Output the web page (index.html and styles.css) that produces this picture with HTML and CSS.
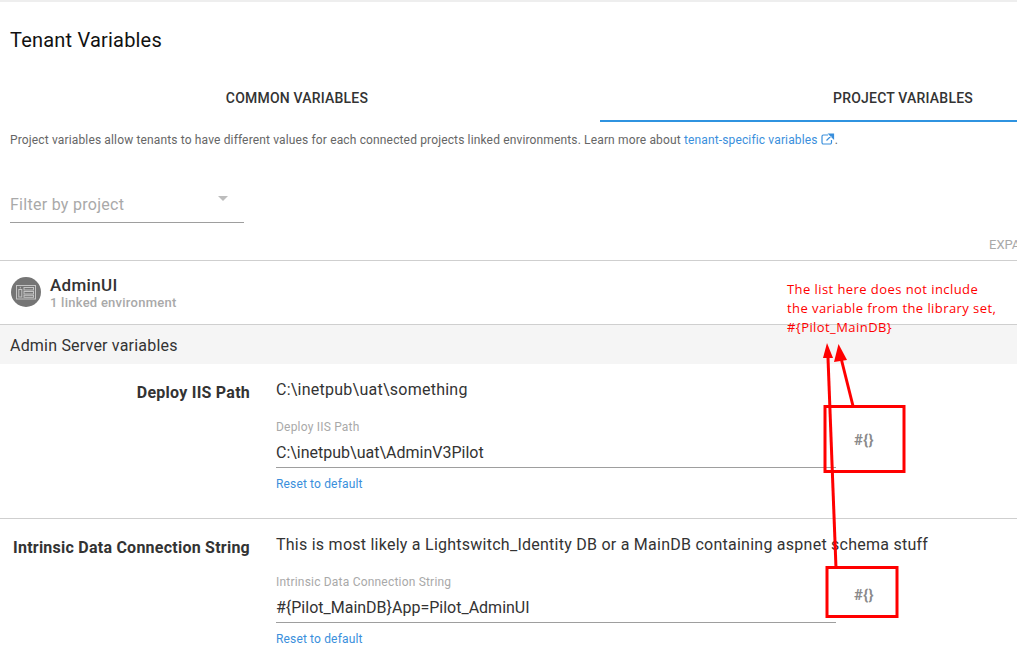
FILE: index.html
```html
<!DOCTYPE html>
<html lang="en">
<head>
<meta charset="utf-8">
<title>Tenant Variables</title>
<link rel="stylesheet" href="styles.css">
</head>
<body>
<main class="page">
  <h1 class="title">Tenant Variables</h1>
  <nav class="tabs">
    <div class="tab tab-common">COMMON VARIABLES</div>
    <div class="tab tab-project">PROJECT VARIABLES</div>
  </nav>
  <p class="help">Project variables allow tenants to have different values for each connected projects linked environments. Learn more about <a class="link">tenant-specific variables <svg class="ext" viewBox="0 0 14 12" width="14" height="12"><path d="M10.5 7v2.6a1.4 1.4 0 0 1-1.4 1.4H2.4A1.4 1.4 0 0 1 1 9.600V3.400A1.400 1.400 0 0 1 2.400 2H7" fill="none" stroke="#3a8fdc" stroke-width="1.200"/><path d="M5.500 7.500 11 2M8 1h4.500v4.500z" fill="#3a8fdc" stroke="#3a8fdc" stroke-width="1.200"/></svg></a>.</p>
  <div class="filter">
    <span class="filter-text">Filter by project</span>
    <span class="caret"></span>
  </div>
  <div class="expand-row"><span class="expand">EXPAND ALL</span></div>
  <section class="project">
    <div class="logo">
      <svg viewBox="0 0 30 30" width="30" height="30"><circle cx="15" cy="15" r="15" fill="#757575"/><g fill="none" stroke="#c4c4c4" stroke-width="1"><rect x="5.500" y="8.500" width="19" height="13.500"/><rect x="7.800" y="12.500" width="3" height="7.500"/><path d="M9.300 9.800v1.600"/><rect x="13" y="10.500" width="9.500" height="2.500"/><rect x="13" y="14.500" width="9.500" height="2.500"/><rect x="13" y="18.300" width="9.500" height="2"/></g></svg>
    </div>
    <div class="project-text">
      <div class="project-name">AdminUI</div>
      <div class="project-sub">1 linked environment</div>
    </div>
  </section>
  <h2 class="group">Admin Server variables</h2>
  <section class="var var-first">
    <div class="var-label">Deploy IIS Path</div>
    <div class="var-body">
      <div class="var-desc">C:\inetpub\uat\something</div>
      <div class="field-label">Deploy IIS Path</div>
      <div class="field-row">
        <div class="field-value">C:\inetpub\uat\AdminV3Pilot</div>
        <div class="bind">#{}</div>
      </div>
      <a class="reset">Reset to default</a>
    </div>
  </section>
  <section class="var">
    <div class="var-label">Intrinsic Data Connection String</div>
    <div class="var-body">
      <div class="var-desc">This is most likely a Lightswitch_Identity DB or a MainDB containing aspnet schema stuff</div>
      <div class="field-label">Intrinsic Data Connection String</div>
      <div class="field-row">
        <div class="field-value">#{Pilot_MainDB}App=Pilot_AdminUI</div>
        <div class="bind">#{}</div>
      </div>
      <a class="reset">Reset to default</a>
    </div>
  </section>
  <svg class="marks" viewBox="0 0 1017 648" width="1017" height="648">
    <g fill="none" stroke="#ff0000">
      <rect x="825" y="406.500" width="79" height="65" stroke-width="3"/>
      <rect x="827" y="567.500" width="70" height="49" stroke-width="3"/>
      <path d="M853 406 841 358" stroke-width="3"/>
      <path d="M836 568 828 358" stroke-width="3"/>
    </g>
    <path d="M838.500 344 847 360 834 362z" fill="#ff0000"/>
    <path d="M827 343 833 358 823 358z" fill="#ff0000"/>
  </svg>
  <div class="note">The list here does not include<br>the variable from the library set,<br>#{Pilot_MainDB}</div>
</main>
</body>
</html>
```
FILE: styles.css
```css
* { box-sizing: border-box; }
html, body { margin: 0; padding: 0; background: #fff; }
body { width: 1017px; height: 648px; overflow: hidden; font-family: Roboto, "Liberation Sans", sans-serif; color: #333; }
.page { position: relative; width: 1017px; height: 648px; overflow: hidden; border-top: 2px solid #eee; }
.title { margin: 0; padding: 26px 0 0 10px; height: 78px; font-size: 20px; line-height: 24px; font-weight: 400; color: #111; letter-spacing: .2px; }
.tabs { display: flex; width: 1206px; height: 42px; }
.tab { font-size: 14px; font-weight: 500; line-height: 36px; text-align: center; color: #333; letter-spacing: .2px; }
.tab-common { width: 600px; padding-right: 6px; }
.tab-project { width: 606px; border-bottom: 2px solid #2f93e0; }
.help { margin: 0; padding: 10px 0 0 10px; height: 36px; font-size: 12px; line-height: 16px; color: #666; white-space: nowrap; letter-spacing: .145px; }
.link { color: #3a8fdc; }
.ext { vertical-align: -1px; }
.filter { display: flex; justify-content: space-between; margin: 24px 0 0 10px; width: 234px; height: 41px; padding: 11px 16px 0 0; border-bottom: 1px solid #9e9e9e; }
.filter-text { font-size: 16px; line-height: 24px; color: #a9a9a9; letter-spacing: .28px; }
.caret { margin-top: 3px; width: 0; height: 0; border-left: 5px solid transparent; border-right: 5px solid transparent; border-top: 5px solid #bdbdbd; }
.expand-row { height: 37px; padding: 11px 0 0 989px; white-space: nowrap; }
.expand { font-size: 13px; line-height: 16px; color: #a9a9a9; }
.project { display: flex; align-items: flex-start; gap: 9px; height: 64px; padding: 16px 0 0 11px; border-top: 1px solid #cfcfcf; }
.project-name { font-size: 17px; line-height: 18px; font-weight: 500; color: #333; margin-top: -1px; letter-spacing: .3px; }
.project-sub { margin-top: 1px; font-size: 13px; line-height: 16px; font-weight: 500; color: #a9a9a9; letter-spacing: .25px; }
.group { margin: 0; height: 40px; padding-left: 10px; font-size: 16px; font-weight: 400; line-height: 42px; color: #333; background: #f5f5f5; border-top: 1px solid #cfcfcf; letter-spacing: .2px; }
.var { display: flex; height: 155px; border-top: 1px solid #cfcfcf; padding-top: 16px; }
.var-first { border-top: 0; height: 154px; }
.var-label { width: 250px; padding-top: 3px; font-size: 16px; font-weight: 700; line-height: 20px; text-align: right; color: #333; white-space: nowrap; letter-spacing: .24px; }
.var-body { margin-left: 26px; flex: none; width: 560px; }
.var-desc { font-size: 16px; line-height: 20px; color: #333; white-space: nowrap; letter-spacing: .25px; }
.field-label { margin-top: 20px; font-size: 12px; line-height: 14px; color: #a9a9a9; letter-spacing: .2px; }
.field-row { position: relative; height: 34px; padding-top: 9px; border-bottom: 1px solid #9e9e9e; }
.field-value { font-size: 16px; line-height: 20px; color: #333; }
.bind { position: absolute; left: 578px; top: -2px; font-size: 15px; line-height: 16px; font-weight: 700; letter-spacing: .3px; color: #8a8a8a; white-space: nowrap; }
.reset { display: block; margin-top: 9px; font-size: 12px; line-height: 14px; color: #3a8fdc; letter-spacing: .15px; }
.marks { position: absolute; left: 0; top: -2px; pointer-events: none; }
.note { position: absolute; left: 787px; top: 278px; font-family: "Open Sans", "Noto Sans", sans-serif; font-size: 13px; line-height: 19px; color: #ff0000; white-space: nowrap; letter-spacing: .43px; }
```
